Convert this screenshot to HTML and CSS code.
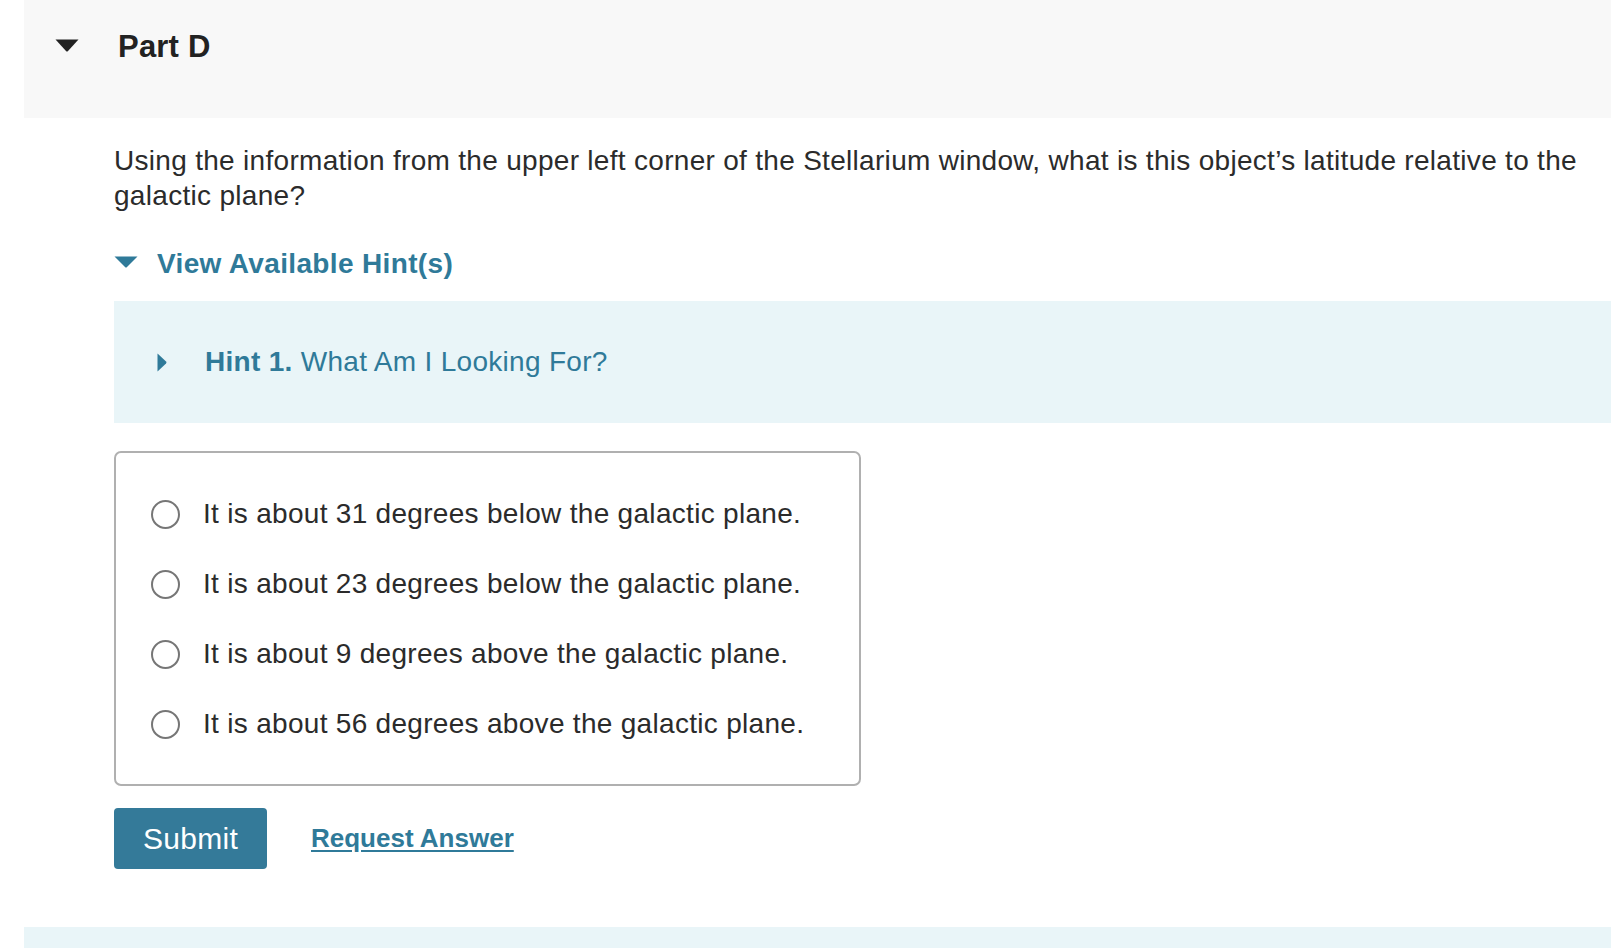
FILE: index.html
```html
<!DOCTYPE html>
<html lang="en">
<head>
<meta charset="utf-8">
<title>Part D</title>
<link rel="stylesheet" href="styles.css">
</head>
<body>
<div class="page">
  <div class="part-header">
    <svg class="caret-down dark" width="24" height="13" viewBox="0 0 24 13"><path d="M0.5 0.5 H23.5 L13 12 Q12 13 11 12 Z" fill="#222"/></svg>
    <h2 class="part-title">Part D</h2>
  </div>
  <div class="content">
    <p class="question">Using the information from the upper left corner of the Stellarium window, what is this object’s latitude relative to the galactic plane?</p>
    <div class="hints-toggle">
      <svg class="caret-down" width="24" height="12" viewBox="0 0 24 12"><path d="M0.5 0.5 H23.5 L13 11 Q12 12 11 11 Z" fill="#2f7a99"/></svg>
      <span class="hints-label">View Available Hint(s)</span>
    </div>
    <div class="hint-box">
      <svg class="caret-right" width="10" height="19" viewBox="0 0 10 19"><path d="M0.5 0.5 L9 8.5 Q10 9.5 9 10.5 L0.5 18.5 Z" fill="#2f7a99"/></svg>
      <span class="hint-text"><b>Hint 1.</b> What Am I Looking For?</span>
    </div>
    <div class="options">
      <label class="option"><span class="radio"></span><span class="option-text">It is about 31 degrees below the galactic plane.</span></label>
      <label class="option"><span class="radio"></span><span class="option-text">It is about 23 degrees below the galactic plane.</span></label>
      <label class="option"><span class="radio"></span><span class="option-text">It is about 9 degrees above the galactic plane.</span></label>
      <label class="option"><span class="radio"></span><span class="option-text">It is about 56 degrees above the galactic plane.</span></label>
    </div>
    <div class="actions">
      <button class="submit" type="button">Submit</button>
      <a class="request" href="#">Request Answer</a>
    </div>
  </div>
  <div class="next-strip"></div>
</div>
</body>
</html>
```
FILE: styles.css
```css
html, body {
  margin: 0;
  padding: 0;
  background: #fff;
}
body {
  font-family: "Liberation Sans", Arial, Helvetica, sans-serif;
  color: #2b2b2b;
  overflow: hidden;
}
.page {
  padding-left: 24px;
  height: 948px;
  box-sizing: border-box;
}
.part-header {
  background: #f8f8f8;
  height: 118px;
  box-sizing: border-box;
  padding: 29px 0 0 31px;
  display: flex;
  align-items: flex-start;
}
.caret-down.dark {
  margin-top: 10px;
  flex: none;
}
.part-title {
  margin: 0 0 0 39px;
  font-size: 31px;
  line-height: 36px;
  font-weight: bold;
  color: #222;
  letter-spacing: 0.2px;
}
.content {
  padding-left: 90px;
}
.question {
  margin: 25px 0 0 0;
  font-size: 28px;
  line-height: 35px;
  color: #2b2b2b;
  letter-spacing: 0.3px;
}
.hints-toggle {
  margin-top: 33px;
  display: flex;
  align-items: center;
  height: 35px;
}
.hints-toggle .caret-down {
  flex: none;
  margin-top: -4px;
}
.hints-label {
  margin-left: 19px;
  font-size: 28px;
  font-weight: bold;
  color: #2f7a99;
  letter-spacing: 0.35px;
}
.hint-box {
  margin-top: 20px;
  height: 122px;
  background: #e9f5f8;
  display: flex;
  align-items: center;
  padding-left: 43px;
  box-sizing: border-box;
}
.hint-box .caret-right {
  flex: none;
  margin-top: 1px;
}
.hint-text {
  margin-left: 38px;
  font-size: 28px;
  color: #2f7a99;
  letter-spacing: 0.3px;
}
.hint-text b {
  font-weight: bold;
}
.options {
  margin-top: 28px;
  width: 747px;
  box-sizing: border-box;
  border: 2px solid #b0b0b0;
  border-radius: 7px;
  padding: 26px 0 25px;
  display: flex;
  flex-direction: column;
}
.option {
  height: 70px;
  display: flex;
  align-items: center;
  padding-left: 35px;
}
.radio {
  flex: none;
  width: 29px;
  height: 29px;
  box-sizing: border-box;
  border: 2px solid #767676;
  border-radius: 50%;
  background: #fff;
}
.option-text {
  margin-left: 23px;
  font-size: 28px;
  color: #2b2b2b;
  letter-spacing: 0.3px;
}
.actions {
  margin-top: 22px;
  display: flex;
  align-items: center;
}
.submit {
  width: 153px;
  height: 61px;
  background: #347a99;
  color: #fff;
  border: none;
  border-radius: 4px;
  font-family: "Liberation Sans", Arial, Helvetica, sans-serif;
  font-size: 30px;
  letter-spacing: 0.3px;
  padding: 0;
}
.request {
  margin-left: 44px;
  font-size: 26px;
  font-weight: bold;
  color: #2f7a99;
  text-decoration: underline;
  text-underline-offset: 3px;
}
.next-strip {
  margin-top: 58px;
  height: 30px;
  background: #e9f5f8;
}
```
